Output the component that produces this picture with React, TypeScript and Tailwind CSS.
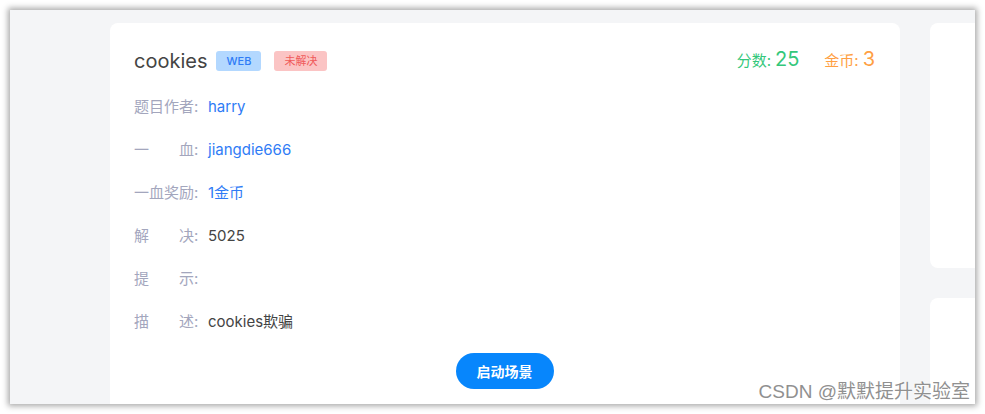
import React from "react";

const font = { fontFamily: 'Inter, "Noto Sans CJK SC", sans-serif' };

function Label({ chars }: { chars: string[] }) {
  return (
    <div className="flex items-center w-[74px] shrink-0 text-[#a3a6bd]">
      <div className="flex justify-between w-[60px]">
        {chars.map((c, i) => (
          <span key={i}>{c}</span>
        ))}
      </div>
      <span>:</span>
    </div>
  );
}

function Row({ chars, children }: { chars: string[]; children?: React.ReactNode }) {
  return (
    <div className="flex items-center h-[20px] text-[15px]">
      <Label chars={chars} />
      <div>{children}</div>
    </div>
  );
}

export default function App() {
  return (
    <div className="w-[985px] h-[414px] bg-white p-[10px]" style={font}>
      <div className="relative w-[965px] h-[394px] bg-[#f4f5f7] overflow-hidden shadow-[0_0_6px_2px_rgba(0,0,0,0.35)]">
        <div className="flex gap-[30px] pl-[100px] pt-[13px]">
          <div className="w-[790px] h-[400px] shrink-0 bg-white rounded-[8px] pl-[24px] pr-[25px] pt-[26px] flex flex-col">
            <div className="flex items-center justify-between h-[24px]">
              <div className="flex items-center">
                <span className="text-[20px] text-[#444] leading-none">cookies</span>
                <span className="ml-[9px] w-[45px] h-[20px] rounded-[3px] bg-[#b3d8ff] text-[#2f7cf6] text-[11px] font-medium flex items-center justify-center">WEB</span>
                <span className="ml-[13px] w-[53px] h-[20px] rounded-[3px] bg-[#fbc4c4] text-[#f05a5a] text-[11px] flex items-center justify-center">未解决</span>
              </div>
              <div className="flex items-baseline">
                <span className="text-[15px] text-[#34c77b]">分数:</span>
                <span className="ml-[4px] text-[20px] text-[#34c77b] leading-none">25</span>
                <span className="ml-[25px] text-[15px] text-[#ff9f43]">金币:</span>
                <span className="ml-[4px] text-[20px] text-[#ff9f43] leading-none">3</span>
              </div>
            </div>
            <div className="mt-[24px] flex flex-col gap-[23px]">
              <Row chars={["题", "目", "作", "者"]}>
                <span className="text-[#2f7cf6]">harry</span>
              </Row>
              <Row chars={["一", "血"]}>
                <span className="text-[#2f7cf6]">jiangdie666</span>
              </Row>
              <Row chars={["一", "血", "奖", "励"]}>
                <span className="text-[#2f7cf6]">1金币</span>
              </Row>
              <Row chars={["解", "决"]}>
                <span className="text-[#444]">5025</span>
              </Row>
              <Row chars={["提", "示"]} />
              <Row chars={["描", "述"]}>
                <span className="text-[#444]">cookies欺骗</span>
              </Row>
            </div>
            <div className="flex justify-center mt-[21px]">
              <button className="w-[98px] h-[36px] rounded-full bg-[#0786fc] text-white text-[14px] font-bold">
                启动场景
              </button>
            </div>
          </div>
          <div className="flex flex-col gap-[30px] shrink-0">
            <div className="w-[200px] h-[245px] bg-white rounded-[8px]" />
            <div className="w-[200px] h-[200px] bg-white rounded-[8px]" />
          </div>
        </div>
        <div
          className="absolute right-[5px] bottom-[0px] text-[19px] text-[#909090] leading-[24px]"
          style={{
            fontFamily: '"Liberation Sans", "Noto Sans CJK SC", sans-serif',
            textShadow: "0 0 2px #fff, 0 0 2px #fff, 0 0 1px #fff",
          }}
        >
          CSDN @默默提升实验室
        </div>
      </div>
    </div>
  );
}
